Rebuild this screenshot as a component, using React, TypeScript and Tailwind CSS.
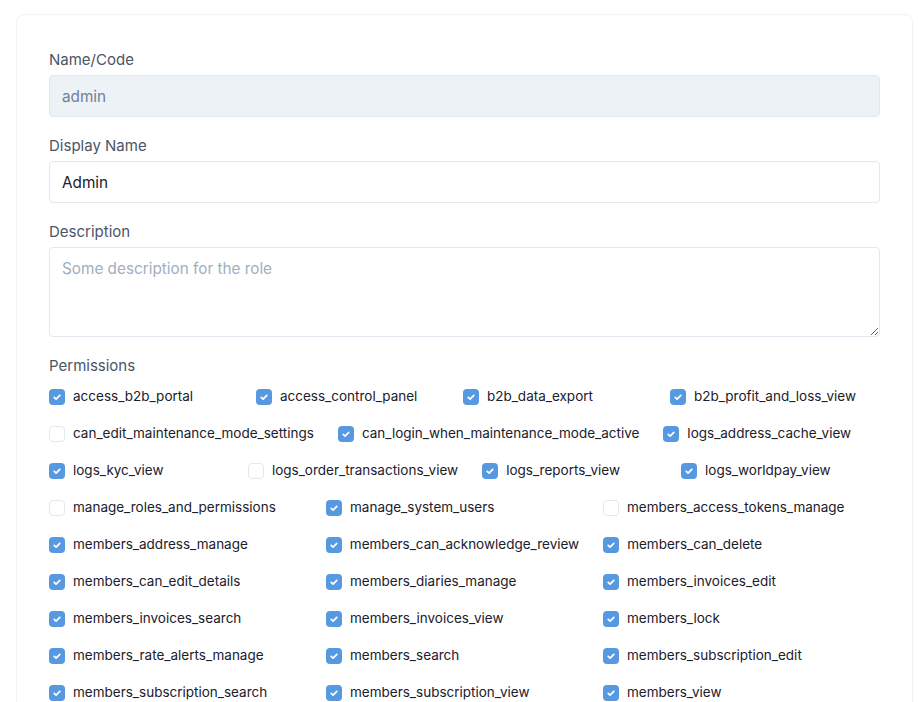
import React from "react";

const perms: [string, boolean][] = [
  ["access_b2b_portal", true],
  ["access_control_panel", true],
  ["b2b_data_export", true],
  ["b2b_profit_and_loss_view", true],
  ["can_edit_maintenance_mode_settings", false],
  ["can_login_when_maintenance_mode_active", true],
  ["logs_address_cache_view", true],
  ["logs_kyc_view", true],
  ["logs_order_transactions_view", false],
  ["logs_reports_view", true],
  ["logs_worldpay_view", true],
  ["manage_roles_and_permissions", false],
  ["manage_system_users", true],
  ["members_access_tokens_manage", false],
  ["members_address_manage", true],
  ["members_can_acknowledge_review", true],
  ["members_can_delete", true],
  ["members_can_edit_details", true],
  ["members_diaries_manage", true],
  ["members_invoices_edit", true],
  ["members_invoices_search", true],
  ["members_invoices_view", true],
  ["members_lock", true],
  ["members_rate_alerts_manage", true],
  ["members_search", true],
  ["members_subscription_edit", true],
  ["members_subscription_search", true],
  ["members_subscription_view", true],
  ["members_view", true],
];

function Box({ checked }: { checked: boolean }) {
  if (checked) {
    return (
      <span className="flex h-4 w-4 shrink-0 items-center justify-center rounded-[4px] bg-[#5799e0]">
        <svg viewBox="0 0 16 16" className="h-4 w-4" fill="none">
          <path
            d="M5.2 8.3l1.9 1.9 3.7-3.9"
            stroke="white"
            strokeWidth="1.7"
            strokeLinecap="round"
            strokeLinejoin="round"
          />
        </svg>
      </span>
    );
  }
  return <span className="h-4 w-4 shrink-0 rounded-[4px] border border-[#e2e8f0] bg-white" />;
}

export default function App() {
  return (
    <div
      className="min-h-screen bg-white"
      style={{ fontFamily: "Inter, 'Noto Sans', sans-serif" }}
    >
      <div className="pl-[16px] pr-[5px] pt-[14px]">
        <div className="rounded-lg border border-[#f1f2f4] bg-white p-8 shadow-[0_1px_2px_rgba(0,0,0,0.03)]">
          <label className="mb-[3px] block pt-px text-[15px] leading-6 text-[#4a5568]">Name/Code</label>
          <input
            disabled
            value="admin"
            readOnly
            className="mb-4 block w-full rounded border border-[#e2e8f0] bg-[#edf2f7] px-3 pt-[9px] pb-[7px] text-[15.3px] leading-6 text-[#718096]"
          />
          <label className="mb-[3px] block pt-px text-[15px] leading-6 text-[#4a5568]">Display Name</label>
          <input
            defaultValue="Admin"
            className="mb-4 block w-full rounded border border-[#e2e8f0] bg-white px-3 pt-[9px] pb-[7px] text-[15.3px] leading-6 text-[#1a202c] outline-none"
          />
          <label className="mb-[3px] block pt-px text-[15px] leading-6 text-[#4a5568]">Description</label>
          <textarea
            rows={3}
            placeholder="Some description for the role"
            className="mb-4 block h-[90px] w-full rounded border border-[#e2e8f0] bg-white px-3 pt-[9px] pb-[7px] text-[15.3px] leading-6 text-[#1a202c] outline-none placeholder:text-[#a0aec0]"
          />
          <div className="block pt-px text-[15px] leading-6 text-[#4a5568]">Permissions</div>
          <div className="flex flex-wrap">
            {perms.map(([name, checked]) => (
              <div
                key={name}
                className="flex h-[37px] grow basis-48 items-center gap-2 whitespace-nowrap pr-6 text-[13.5px] text-[#1a202c]"
              >
                <Box checked={checked} />
                <span>{name}</span>
              </div>
            ))}
          </div>
        </div>
      </div>
    </div>
  );
}
